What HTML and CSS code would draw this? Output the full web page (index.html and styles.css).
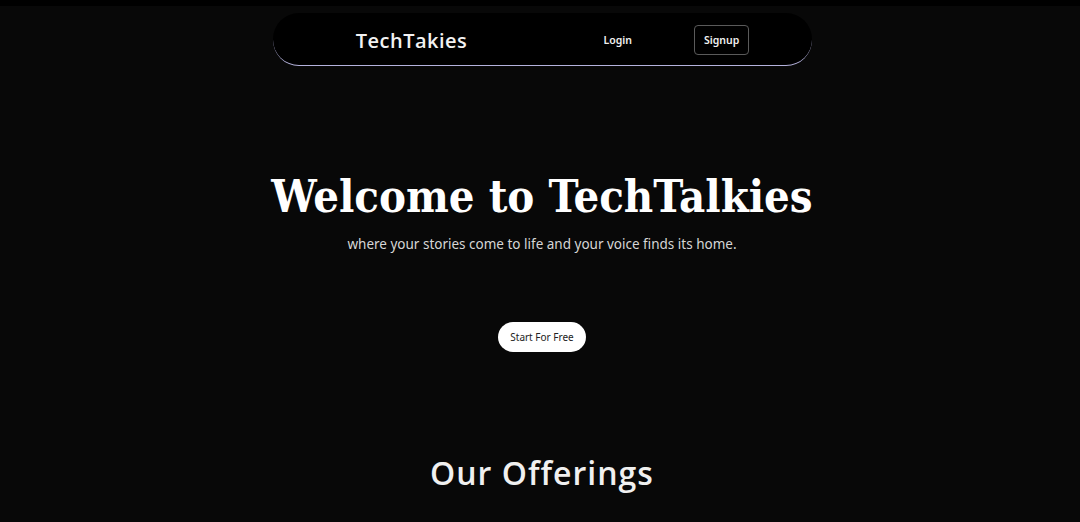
FILE: index.html
```html
<!DOCTYPE html>
<html lang="en">
  <head>
    <meta charset="UTF-8" />
    <meta name="viewport" content="width=device-width, initial-scale=1.0" />
    <title>TechTalkies</title>
    <link rel="stylesheet" href="styles.css">
  </head>

  <body>
    <nav class="navbar">
      <div class="logo">TechTakies</div>
      <div class="nav-links">
        <a href="#" class="login">Login</a>
        <a href="#" class="signup">Signup</a>
      </div>
    </nav>

    <section class="hero">
      <h1>Welcome to TechTalkies</h1>
      <p>where your stories come to life and your voice finds its home.</p>
      <button class="start-button">Start For Free</button>
    </section>

    <section class="offerings">
      <h2>Our Offerings</h2>
    </section>
  </body>
</html>
```

FILE: styles.css
```css
body {
  margin: 0;
  padding-left: 4px;
  background-color: #080808;
  border-top: 6px solid #000;
  color: white;
  font-family: "Noto Sans", sans-serif;
  text-align: center;
}

.navbar {
  width: 539px;
  height: 53px;
  margin: 7px auto 0;
  padding-top: 2px;
  box-sizing: border-box;
  background-color: #000;
  border-bottom: 1px solid #b4b2dc;
  border-radius: 26px;
  display: flex;
  align-items: center;
}

.logo {
  width: 278px;
  font-family: "Open Sans", sans-serif;
  font-size: 20px;
  font-weight: 600;
  letter-spacing: 0.5px;
  color: #f2f2f2;
}

.nav-links {
  display: flex;
  align-items: center;
  margin-left: 53px;
  gap: 62px;
}

.nav-links a {
  color: #f0f0f0;
  text-decoration: none;
  font-size: 10.5px;
  font-weight: 600;
}

.signup {
  border: 1px solid #5a5a5a;
  border-radius: 4px;
  padding: 7px 9px;
}

.hero {
  padding-top: 104px;
}

.hero h1 {
  margin: 0;
  font-family: "DejaVu Serif", serif;
  font-stretch: condensed;
  font-size: 45px;
  font-weight: bold;
  color: #fff;
}

.hero p {
  margin: 12px 0 0;
  font-size: 13.5px;
  color: #d6d6d6;
}

.start-button {
  margin-top: 69px;
  background-color: #fff;
  color: #222;
  border: none;
  border-radius: 15px;
  padding: 8px 12px;
  font-family: "Noto Sans", sans-serif;
  font-size: 10px;
  cursor: pointer;
}

.offerings h2 {
  margin: 99px 0 0;
  font-family: "Open Sans", sans-serif;
  font-size: 32px;
  font-weight: 600;
  letter-spacing: 1px;
  color: #f0f0f0;
}
```
